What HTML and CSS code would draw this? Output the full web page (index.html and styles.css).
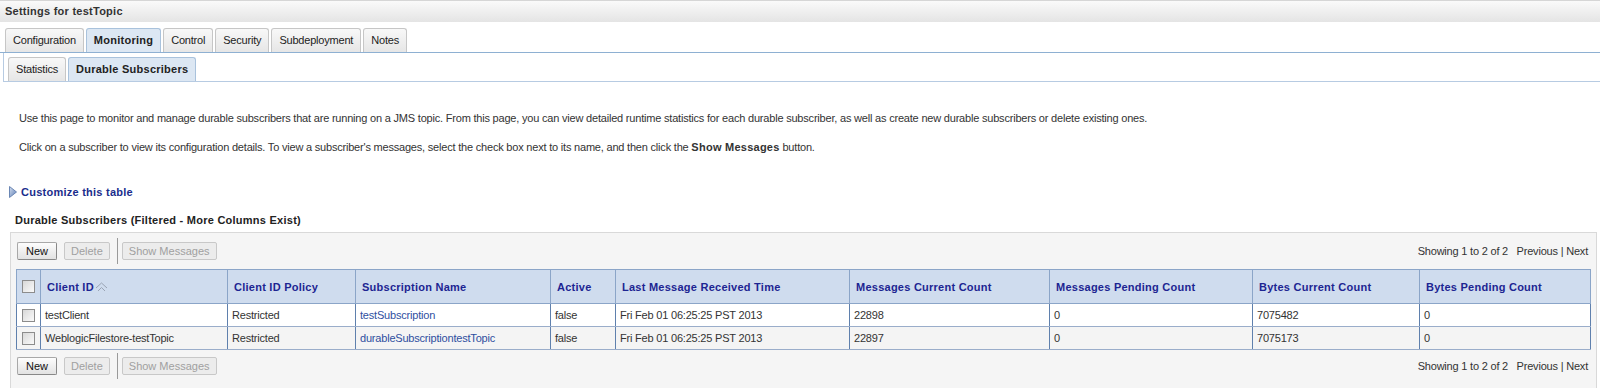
FILE: index.html
```html
<!DOCTYPE html>
<html lang="en">
<head>
    <meta charset="UTF-8">
    <title>Settings for testTopic</title>
    <link rel="stylesheet" href="styles.css">
</head>
<body>
    <div class="title-bar">Settings for testTopic</div>

    <div class="tabs">
        <div class="tab">Configuration</div>
        <div class="tab active">Monitoring</div>
        <div class="tab">Control</div>
        <div class="tab">Security</div>
        <div class="tab">Subdeployment</div>
        <div class="tab">Notes</div>
    </div>

    <div class="subtabs">
        <div class="tab">Statistics</div>
        <div class="tab active">Durable Subscribers</div>
    </div>

    <div class="content">
        <p>Use this page to monitor and manage durable subscribers that are running on a JMS topic. From this page, you can view detailed runtime statistics for each durable subscriber, as well as create new durable subscribers or delete existing ones.</p>
        <p>Click on a subscriber to view its configuration details. To view a subscriber's messages, select the check box next to its name, and then click the <b>Show Messages</b> button.</p>

        <a class="customize" href="#">
            <svg width="8" height="12" viewBox="0 0 8 12">
                <defs>
                    <linearGradient id="tri" x1="0" y1="0" x2="1" y2="1">
                        <stop offset="0" stop-color="#d6e0f0"/>
                        <stop offset="1" stop-color="#5b7db5"/>
                    </linearGradient>
                </defs>
                <path d="M0.5 0.5 L7.5 6 L0.5 11.5 Z" fill="url(#tri)" stroke="#6a86b4" stroke-width="1"/>
            </svg>
            Customize this table
        </a>

        <h3 class="table-title">Durable Subscribers (Filtered - More Columns Exist)</h3>

        <div class="table-box">
            <div class="toolbar">
                <button class="btn">New</button>
                <button class="btn" disabled>Delete</button>
                <span class="sep"></span>
                <button class="btn" disabled>Show Messages</button>
                <div class="paging">Showing 1 to 2 of 2 &nbsp;&nbsp;Previous | Next</div>
            </div>

            <table>
                <colgroup>
                    <col class="c-check">
                    <col class="c-client">
                    <col class="c-policy">
                    <col class="c-sub">
                    <col class="c-active">
                    <col class="c-last">
                    <col class="c-mcur">
                    <col class="c-mpend">
                    <col class="c-bcur">
                    <col class="c-bpend">
                </colgroup>
                <thead>
                    <tr>
                        <th class="check"><span class="cb"></span></th>
                        <th>Client ID<svg class="sort" width="13" height="10" viewBox="0 0 13 10">
                                <path d="M1 6 L6.5 1 L12 6" fill="none" stroke="#9aa4b4" stroke-width="1"/>
                                <path d="M3 9 L6.5 5.5 L10 9" fill="none" stroke="#9aa4b4" stroke-width="1"/>
                            </svg></th>
                        <th>Client ID Policy</th>
                        <th>Subscription Name</th>
                        <th>Active</th>
                        <th>Last Message Received Time</th>
                        <th>Messages Current Count</th>
                        <th>Messages Pending Count</th>
                        <th>Bytes Current Count</th>
                        <th>Bytes Pending Count</th>
                    </tr>
                </thead>
                <tbody>
                    <tr>
                        <td class="check"><span class="cb"></span></td>
                        <td>testClient</td>
                        <td>Restricted</td>
                        <td><a href="#">testSubscription</a></td>
                        <td>false</td>
                        <td>Fri Feb 01 06:25:25 PST 2013</td>
                        <td>22898</td>
                        <td>0</td>
                        <td>7075482</td>
                        <td>0</td>
                    </tr>
                    <tr>
                        <td class="check"><span class="cb"></span></td>
                        <td>WeblogicFilestore-testTopic</td>
                        <td>Restricted</td>
                        <td><a href="#">durableSubscriptiontestTopic</a></td>
                        <td>false</td>
                        <td>Fri Feb 01 06:25:25 PST 2013</td>
                        <td>22897</td>
                        <td>0</td>
                        <td>7075173</td>
                        <td>0</td>
                    </tr>
                </tbody>
            </table>

            <div class="toolbar bottom">
                <button class="btn">New</button>
                <button class="btn" disabled>Delete</button>
                <span class="sep"></span>
                <button class="btn" disabled>Show Messages</button>
                <div class="paging">Showing 1 to 2 of 2 &nbsp;&nbsp;Previous | Next</div>
            </div>
        </div>
    </div>
</body>
</html>
```

FILE: styles.css
```css
body {
    margin: 0;
    font-family: "Liberation Sans", Arial, sans-serif;
    font-size: 11px;
    letter-spacing: -0.2px;
    color: #333;
    background: #fff;
}

b, .title-bar, .tab.active, .customize, .table-title, th {
    letter-spacing: 0.25px;
}

.title-bar {
    height: 21px;
    line-height: 21px;
    border-top: 1px solid #d6d6d6;
    background: linear-gradient(#fafafa, #e4e4e4);
    padding-left: 5px;
    font-weight: bold;
    color: #333;
}

.tabs {
    display: flex;
    gap: 2px;
    padding: 6px 0 0 5px;
    border-bottom: 1px solid #8eb0d2;
}

.tab {
    height: 23px;
    line-height: 23px;
    padding: 0 7px;
    border: 1px solid #c6c6c6;
    border-bottom: none;
    border-radius: 3px 3px 0 0;
    background: linear-gradient(#f8f8f8, #e6e6e6);
    color: #222;
}

.tab.active {
    background: #dce7f3;
    border-color: #a9c2dc;
    font-weight: bold;
}

.subtabs {
    display: flex;
    gap: 2px;
    margin-left: 3px;
    padding: 4px 0 0 4px;
    border-left: 1px solid #b7cbe2;
    border-bottom: 1px solid #b7cbe2;
}

.content {
    padding: 29px 3px 0 9px;
}

.content p {
    margin: 0 0 15px 10px;
    line-height: 14px;
}

.customize {
    display: flex;
    align-items: center;
    gap: 4px;
    margin-top: 31px;
    color: #1a2d8c;
    font-weight: bold;
    text-decoration: none;
    line-height: 14px;
}

.table-title {
    margin: 14px 0 5px 6px;
    font-size: 11px;
    line-height: 14px;
    color: #222;
}

.table-box {
    margin-left: 1px;
    padding: 5px 6px 10px 5px;
    border: 1px solid #d9d9d9;
    background: #f5f5f5;
}

.toolbar {
    display: flex;
    align-items: center;
    gap: 7px;
    height: 26px;
    margin-bottom: 5px;
    padding-left: 1px;
}

.toolbar.bottom {
    margin: 3px 0 0;
}

.btn {
    min-width: 40px;
    height: 18px;
    padding: 0 6px;
    border: 1px solid #a8a8a8;
    border-right-color: #888;
    border-bottom-color: #888;
    border-radius: 2px;
    background: linear-gradient(#fdfdfd, #e2e2e2);
    font-family: "Liberation Sans", Arial, sans-serif;
    font-size: 11px;
    color: #111;
}

.btn:disabled {
    border-color: #c8c8c8;
    background: #ececec;
    color: #a0a0a0;
}

.sep {
    width: 1px;
    height: 26px;
    background: #9a9a9a;
    margin: 0 -3px 0 0;
}

.paging {
    margin-left: auto;
    margin-right: 2px;
    color: #333;
}

table {
    width: 100%;
    border-collapse: collapse;
    border: 1px solid #6f8cb4;
    table-layout: fixed;
}

.c-check { width: 24px; }
.c-client { width: 187px; }
.c-policy { width: 128px; }
.c-sub { width: 195px; }
.c-active { width: 65px; }
.c-last { width: 234px; }
.c-mcur { width: 200px; }
.c-mpend { width: 203px; }
.c-bcur { width: 167px; }
.c-bpend { width: 171px; }

th {
    height: 33px;
    padding: 0 6px;
    background: #cfdcee;
    border: 1px solid #8ba5c8;
    text-align: left;
    font-weight: bold;
    color: #1d2592;
    white-space: nowrap;
}

td {
    height: 22px;
    padding: 0 4px;
    border-top: 1px solid #9aadca;
    border-bottom: 1px solid #9aadca;
    border-left: 1px solid #5f80ad;
    border-right: 1px solid #5f80ad;
    background: #fff;
    color: #333;
    white-space: nowrap;
}

tbody tr:nth-child(even) td {
    background: #f4f4f4;
}

td a {
    color: #2f4f9f;
    text-decoration: none;
}

th.check, td.check {
    padding: 0 0 0 5px;
}

.cb {
    display: inline-block;
    width: 11px;
    height: 11px;
    border: 1px solid #8c8c8c;
    background: linear-gradient(135deg, #d8d8d8, #fafafa);
    vertical-align: middle;
}

.sort {
    vertical-align: -1px;
    margin-left: 1px;
}
```
